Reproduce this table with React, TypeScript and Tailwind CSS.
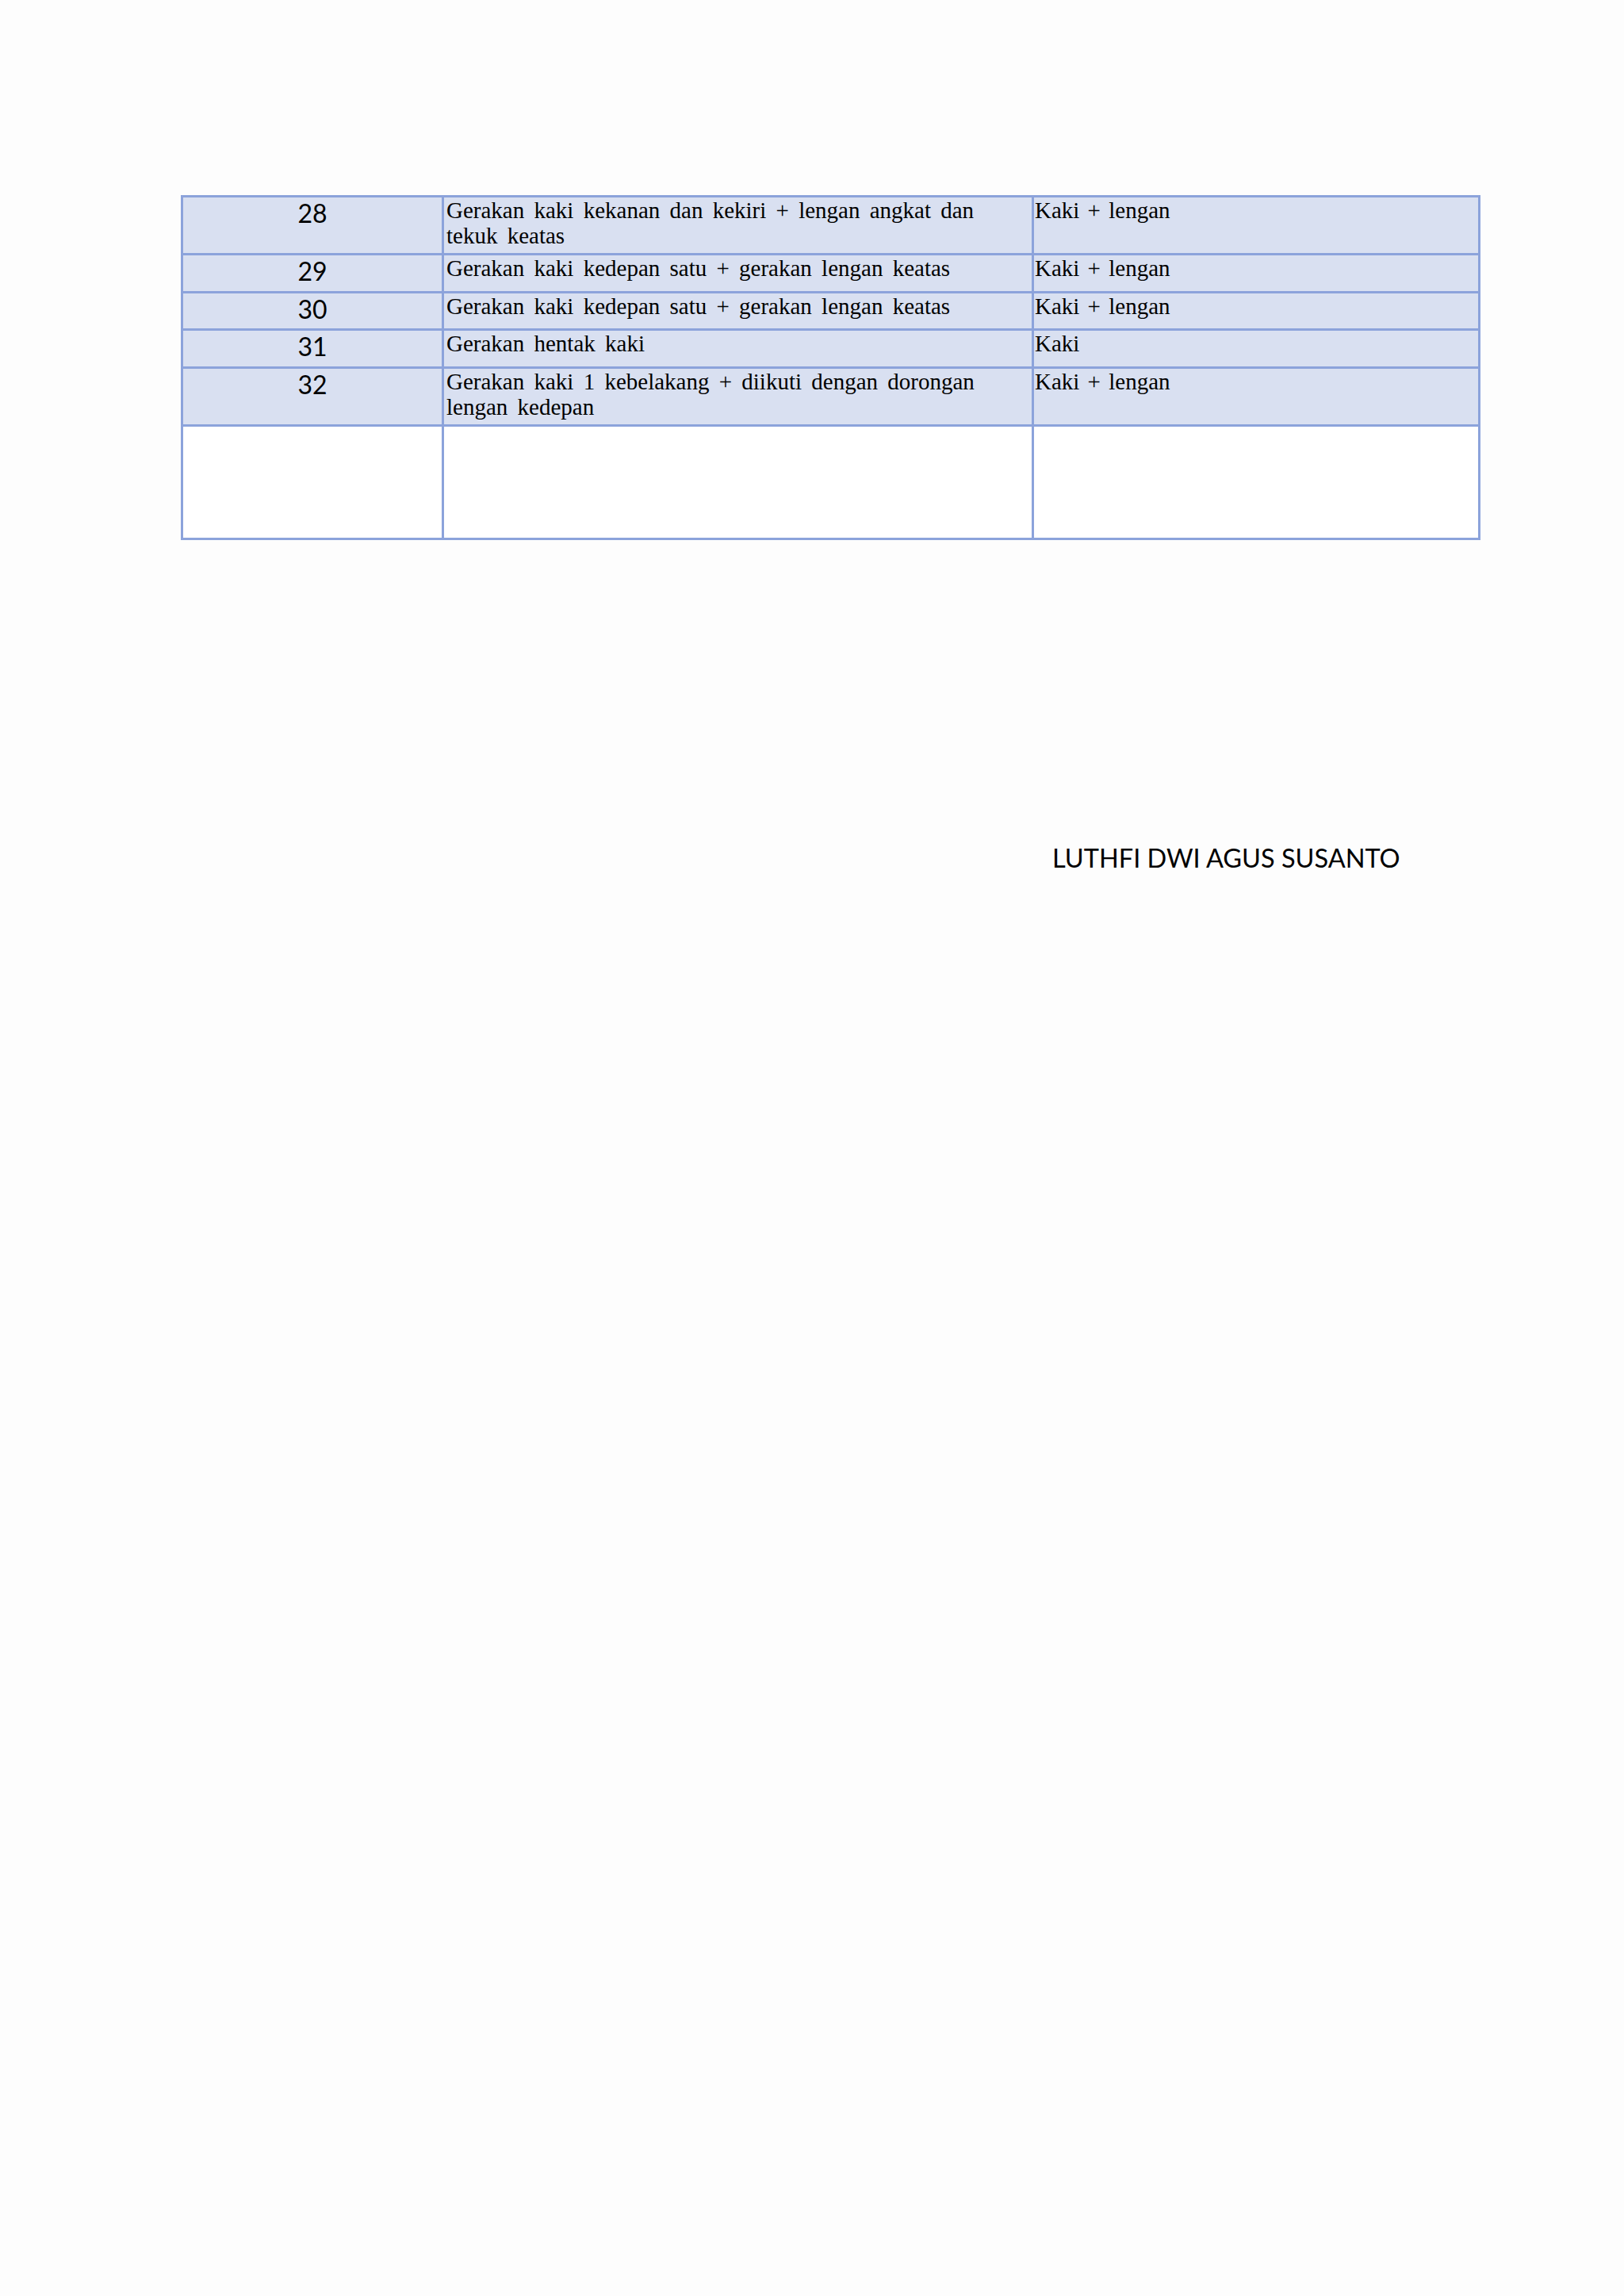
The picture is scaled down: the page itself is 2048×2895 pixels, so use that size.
const rows = [
  { no: "28", gerakan: ["Gerakan kaki kekanan dan kekiri + lengan angkat dan", "tekuk keatas"], bagian: "Kaki + lengan", h: "h-[73px]" },
  { no: "29", gerakan: ["Gerakan kaki kedepan satu + gerakan lengan keatas"], bagian: "Kaki + lengan", h: "h-[48px]" },
  { no: "30", gerakan: ["Gerakan kaki kedepan satu + gerakan lengan keatas"], bagian: "Kaki + lengan", h: "h-[47px]" },
  { no: "31", gerakan: ["Gerakan hentak kaki"], bagian: "Kaki", h: "h-[48px]" },
  { no: "32", gerakan: ["Gerakan kaki 1 kebelakang + diikuti dengan dorongan", "lengan kedepan"], bagian: "Kaki + lengan", h: "h-[73px]" },
];

export default function App() {
  return (
    <div className="min-h-[2895px] w-[2048px] bg-[#fdfdfd] pt-[246px]">
      <table className="ml-[228px] w-[1636px] table-fixed border-collapse border-[3px] border-[#8ca3db]">
        <colgroup>
          <col className="w-[329px]" />
          <col className="w-[744px]" />
          <col className="w-[563px]" />
        </colgroup>
        <tbody>
          {rows.map((r) => (
            <tr key={r.no} className={`${r.h} bg-[#d9e0f1]`}>
              <td className="border-[3px] border-[#8ca3db] p-0 pt-[4px] align-top text-center font-['Lato','Open_Sans',sans-serif] text-[32px] leading-[32px] text-black">
                {r.no}
              </td>
              <td className="border-[3px] border-[#8ca3db] p-0 pl-[3px] align-top font-['Liberation_Serif','Times_New_Roman',serif] text-[29px] leading-[32px] text-black [word-spacing:5px]">
                {r.gerakan.map((line) => (
                  <div key={line} className="whitespace-nowrap">{line}</div>
                ))}
              </td>
              <td className="border-[3px] border-[#8ca3db] p-0 pl-[1px] align-top font-['Liberation_Serif','Times_New_Roman',serif] text-[29px] leading-[32px] text-black [word-spacing:3px]">
                {r.bagian}
              </td>
            </tr>
          ))}
          <tr className="h-[143px] bg-white">
            <td className="border-[3px] border-[#8ca3db]"></td>
            <td className="border-[3px] border-[#8ca3db]"></td>
            <td className="border-[3px] border-[#8ca3db]"></td>
          </tr>
        </tbody>
      </table>

      <div className="ml-[1327px] mt-[381px] font-['Lato','Open_Sans',sans-serif] text-[32.5px] leading-[40px] text-black">
        LUTHFI DWI AGUS SUSANTO
      </div>
    </div>
  );
}
